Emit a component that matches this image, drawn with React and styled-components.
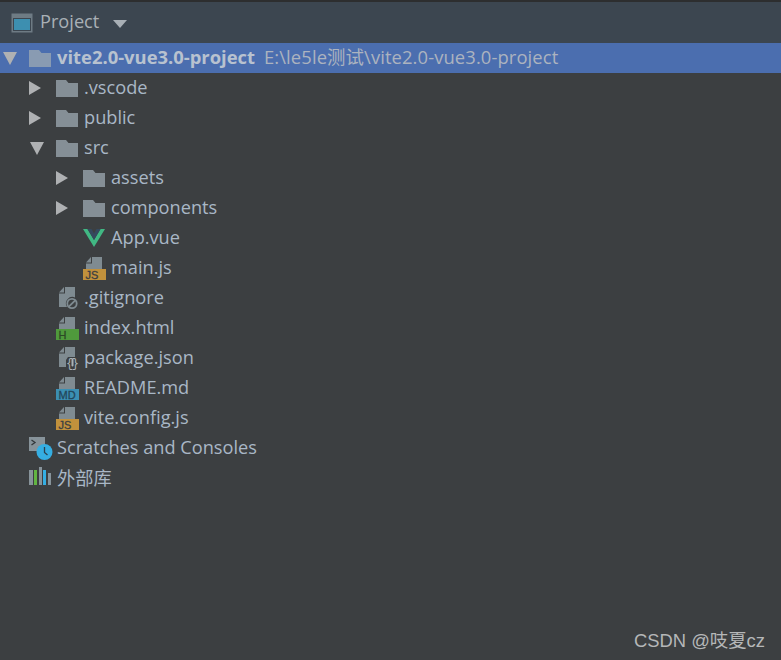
import React from "react";
import styled, { createGlobalStyle } from "styled-components";

const GlobalStyle = createGlobalStyle`
  html, body {
    margin: 0;
    padding: 0;
    background: #3c3f41;
  }
`;

const FILE_GREY = "#7f8b91";

function FolderIcon() {
  return (
    <svg width="22" height="18" viewBox="0 0 22 18">
      <path d="M0 1h10l2.500 3H22v14H0z" fill="#9eabb3" opacity="0.75" />
    </svg>
  );
}

function ToolIcon() {
  return (
    <svg width="22" height="20" viewBox="0 0 22 20">
      <rect x="0.5" y="0.5" width="21" height="19" fill="#6e7b84" />
      <rect x="2" y="5" width="18" height="13" fill="#3c4650" />
      <rect x="3" y="6" width="16" height="11" fill="#3d8fb0" />
    </svg>
  );
}

function VueIcon() {
  return (
    <svg width="22" height="18" viewBox="0 0 22 18">
      <path d="M0 0h4.500L11 11 17.500 0H22L11 18z" fill="#41b883" />
      <path d="M4.500 0h4L11 4.500 13.500 0h4L11 11z" fill="#35495e" />
    </svg>
  );
}

function BadgeFileIcon({ label, color, ink }) {
  return (
    <svg width="23" height="24" viewBox="0 0 23 24">
      <path d="M8 1v5.500H3z" fill={FILE_GREY} />
      <path d="M9 1h10v12H3V7.500h6z" fill={FILE_GREY} />
      <rect x="0" y="13" width="23" height="11" fill={color} />
      <text x="2.500" y="22.500" fontFamily="Liberation Sans, sans-serif" fontSize="11" stroke={ink} strokeWidth="0.3" fill={ink}>
        {label}
      </text>
    </svg>
  );
}

function IgnoreIcon() {
  return (
    <svg width="23" height="24" viewBox="0 0 23 24">
      <path d="M9 1h10v10.500a6.500 6.500 0 0 0-8 9.500H3V7.500h6z" fill={FILE_GREY} />
      <path d="M8 1v5.500H3z" fill={FILE_GREY} />
      <circle cx="16" cy="17.500" r="4.700" fill="none" stroke={FILE_GREY} strokeWidth="1.800" />
      <path d="M12.800 20.700l6.400-6.400" stroke={FILE_GREY} strokeWidth="1.800" />
    </svg>
  );
}

function JsonIcon() {
  return (
    <svg width="24" height="24" viewBox="0 0 24 24">
      <path d="M9 1h10v10h-7l-2 3v7H3V7.500h6z" fill={FILE_GREY} />
      <path d="M8 1v5.500H3z" fill={FILE_GREY} />
      <text x="10" y="21" fontFamily="Liberation Mono, monospace" fontSize="12" fill="#aab2b7" textLength="13">
        {"{}"}
      </text>
      <rect x="15.500" y="12.500" width="2" height="8" rx="1" fill="#aab2b7" />
    </svg>
  );
}

function ScratchIcon() {
  return (
    <svg width="24" height="24" viewBox="0 0 24 24">
      <rect x="0" y="1" width="16" height="14" fill="#87939a" />
      <path d="M2.500 4l3.500 2.500L2.500 9" fill="none" stroke="#33383b" strokeWidth="1.300" />
      <circle cx="15.500" cy="16" r="8" fill="#35aee2" />
      <path d="M15.500 11v5.500l3 2.500" fill="none" stroke="#2b4150" strokeWidth="1.300" />
    </svg>
  );
}

function LibraryIcon() {
  return (
    <svg width="22" height="22" viewBox="0 0 22 22">
      <rect x="0" y="3" width="4" height="15" fill="#87939a" />
      <rect x="5" y="3" width="3" height="15" fill="#62b543" />
      <rect x="10" y="0" width="3" height="18" fill="#87939a" />
      <rect x="14" y="3" width="3" height="15" fill="#35aee2" />
      <rect x="19" y="6" width="3" height="12" fill="#87939a" />
    </svg>
  );
}

const TREE = [
  { level: 0, arrow: "down", icon: <FolderIcon />, name: "vite2.0-vue3.0-project", path: "E:\\le5le测试\\vite2.0-vue3.0-project", selected: true },
  { level: 1, arrow: "right", icon: <FolderIcon />, name: ".vscode" },
  { level: 1, arrow: "right", icon: <FolderIcon />, name: "public" },
  { level: 1, arrow: "down", icon: <FolderIcon />, name: "src" },
  { level: 2, arrow: "right", icon: <FolderIcon />, name: "assets" },
  { level: 2, arrow: "right", icon: <FolderIcon />, name: "components" },
  { level: 2, icon: <VueIcon />, name: "App.vue" },
  { level: 2, icon: <BadgeFileIcon label="JS" color="#c1913c" ink="#3c3f41" />, name: "main.js" },
  { level: 1, icon: <IgnoreIcon />, name: ".gitignore" },
  { level: 1, icon: <BadgeFileIcon label="H" color="#4f9a3c" ink="#2c4a26" />, name: "index.html" },
  { level: 1, icon: <JsonIcon />, name: "package.json" },
  { level: 1, icon: <BadgeFileIcon label="MD" color="#3b8fb3" ink="#23465a" />, name: "README.md" },
  { level: 1, icon: <BadgeFileIcon label="JS" color="#c1913c" ink="#3c3f41" />, name: "vite.config.js" },
  { level: 0, icon: <ScratchIcon />, name: "Scratches and Consoles" },
  { level: 0, icon: <LibraryIcon />, name: "外部库" },
];

export default function App() {
  return (
    <>
      <GlobalStyle />
      <Window>
        <Header>
          <ToolIcon />
          <HeaderTitle>Project</HeaderTitle>
          <HeaderCaret />
        </Header>
        <Tree>
          {TREE.map((node) => (
            <Row key={node.name} $level={node.level} $selected={node.selected}>
              <ArrowSlot>{node.arrow && <Arrow $dir={node.arrow} />}</ArrowSlot>
              <IconSlot>{node.icon}</IconSlot>
              <Name $bold={node.selected}>{node.name}</Name>
              {node.path && <PathText>{node.path}</PathText>}
            </Row>
          ))}
        </Tree>
        <Watermark>CSDN @吱夏cz</Watermark>
      </Window>
    </>
  );
}

const Window = styled.div`
  position: relative;
  width: 781px;
  height: 660px;
  overflow: hidden;
  background: #3c3f41;
  color: #a9b7c6;
  font-family: "Open Sans", "Noto Sans CJK SC", sans-serif;
  font-size: 18.2px;
`;

const Header = styled.div`
  display: flex;
  align-items: center;
  height: 41px;
  padding-left: 11px;
  background: #3c4650;
  border-top: 2px solid #2d2e2f;
`;

const HeaderTitle = styled.span`
  margin-left: 7px;
  padding-bottom: 4px;
  color: #a9b0b6;
`;

const HeaderCaret = styled.span`
  margin-left: 14px;
  margin-top: 2px;
  border-left: 7px solid transparent;
  border-right: 7px solid transparent;
  border-top: 8px solid #a9b0b6;
`;

const Tree = styled.div`
  display: flex;
  flex-direction: column;
`;

const Row = styled.div`
  display: flex;
  align-items: center;
  height: 30px;
  padding-left: ${(p) => 2 + p.$level * 27}px;
  background: ${(p) => (p.$selected ? "#4b6eaf" : "transparent")};
  white-space: nowrap;
`;

const ArrowSlot = styled.span`
  display: flex;
  align-items: center;
  flex: none;
  width: 27px;
  height: 100%;
`;

const Arrow = styled.span`
  ${(p) =>
    p.$dir === "down"
      ? `
    margin-left: 1px;
    border-left: 7px solid transparent;
    border-right: 7px solid transparent;
    border-top: 13px solid #afb1b3;
  `
      : `
    border-top: 7px solid transparent;
    border-bottom: 7px solid transparent;
    border-left: 12px solid #afb1b3;
  `}
`;

const IconSlot = styled.span`
  display: flex;
  align-items: center;
  flex: none;
  width: 28px;
  height: 100%;
`;

const Name = styled.span`
  padding-bottom: ${(p) => (p.$bold ? "4px" : "2px")};
  font-size: ${(p) => (p.$bold ? "18.4px" : "inherit")};
  font-weight: ${(p) => (p.$bold ? 700 : 400)};
  color: ${(p) => (p.$bold ? "#b8c2cf" : "#a9b7c6")};
`;

const PathText = styled.span`
  margin-left: 9px;
  padding-bottom: 4px;
  font-size: 18.4px;
  letter-spacing: 0.1px;
  color: #acb3bf;
`;

const Watermark = styled.div`
  position: absolute;
  right: 16px;
  bottom: 8px;
  color: #b5b7b8;
  font-family: "Liberation Sans", "Noto Sans CJK SC", sans-serif;
  font-size: 18.4px;
`;
